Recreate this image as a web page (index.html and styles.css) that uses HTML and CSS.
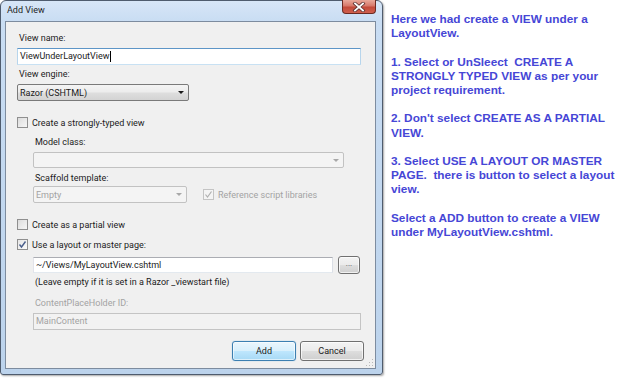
FILE: index.html
```html
<!DOCTYPE html>
<html>
<head>
<meta charset="utf-8">
<title>Add View</title>
<link rel="stylesheet" href="styles.css">
</head>
<body>
<div class="page">
  <div class="window">
    <div class="titlebar">
      <span class="title">Add View</span>
      <div class="close">
        <svg width="14" height="10" viewBox="0 0 14 10">
          <path d="M3 1.5 L11 8.5 M11 1.5 L3 8.5" stroke="#5a3030" stroke-width="3.4" stroke-linecap="square"/>
          <path d="M3 1.5 L11 8.5 M11 1.5 L3 8.5" stroke="#ffffff" stroke-width="1.8" stroke-linecap="square"/>
        </svg>
      </div>
    </div>
    <div class="client">
      <div class="label l-name">View name:</div>
      <div class="textbox focused full">ViewUnderLayoutView<span class="caret"></span></div>
      <div class="label l-engine">View engine:</div>
      <div class="combo engine"><span>Razor (CSHTML)</span><span class="arrow"></span></div>

      <div class="check-row r-strong"><span class="check"></span><span>Create a strongly-typed view</span></div>
      <div class="indent">
        <div class="label l-model">Model class:</div>
        <div class="combo disabled model"><span></span><span class="arrow"></span></div>
        <div class="label l-scaffold">Scaffold template:</div>
        <div class="scaffold-row">
          <div class="combo disabled scaffold"><span>Empty</span><span class="arrow"></span></div>
          <div class="check-row ref"><span class="check checked disabled-check"><svg width="9" height="9" viewBox="0 0 9 9"><path d="M1.5 4.5 L3.5 7 L7.5 1.5" fill="none" stroke="#b0b0b0" stroke-width="1.2"/></svg></span><span class="muted">Reference script libraries</span></div>
        </div>
      </div>

      <div class="check-row r-partial"><span class="check"></span><span>Create as a partial view</span></div>
      <div class="check-row r-layout"><span class="check checked"><svg width="9" height="9" viewBox="0 0 9 9"><path d="M1.5 4.5 L3.5 7 L7.5 1.5" fill="none" stroke="#4a5f8c" stroke-width="1.4"/></svg></span><span>Use a layout or master page:</span></div>
      <div class="indent">
        <div class="layout-row">
          <div class="textbox layout">~/Views/MyLayoutView.cshtml</div>
          <div class="btn dots">...</div>
        </div>
        <div class="label l-leave">(Leave empty if it is set in a Razor _viewstart file)</div>
        <div class="label muted l-cph">ContentPlaceHolder ID:</div>
        <div class="textbox disabled-box">MainContent</div>
      </div>

      <div class="buttons">
        <div class="btn default">Add</div>
        <div class="btn">Cancel</div>
      </div>
      <svg class="grip" width="8" height="8" viewBox="0 0 8 8">
        <rect x="6" y="0" width="1" height="1" fill="#b8b8b8"/>
        <rect x="3" y="3" width="1" height="1" fill="#b8b8b8"/>
        <rect x="6" y="3" width="1" height="1" fill="#b8b8b8"/>
        <rect x="0" y="6" width="1" height="1" fill="#b8b8b8"/>
        <rect x="3" y="6" width="1" height="1" fill="#b8b8b8"/>
        <rect x="6" y="6" width="1" height="1" fill="#b8b8b8"/>
      </svg>
    </div>
  </div>

  <div class="notes">
    <p>Here we had create a VIEW under a<br>LayoutView.</p>
    <p>1. Select or UnSleect&nbsp; CREATE A<br>STRONGLY TYPED VIEW as per your<br>project requirement.</p>
    <p>2. Don't select CREATE AS A PARTIAL<br>VIEW.</p>
    <p>3. Select USE A LAYOUT OR MASTER<br>PAGE.&nbsp; there is button to select a layout<br>view.</p>
    <p>Select a ADD button to create a VIEW<br>under MyLayoutView.cshtml.</p>
  </div>
</div>
</body>
</html>
```

FILE: styles.css
```css
html, body {
  margin: 0;
  padding: 0;
  background: #ffffff;
}

.page {
  display: flex;
  align-items: flex-start;
  width: 642px;
  height: 378px;
  overflow: hidden;
}

/* ---------- window ---------- */
.window {
  box-sizing: border-box;
  width: 383px;
  height: 375px;
  border: 1px solid #4f5c6e;
  border-radius: 6px 6px 3px 3px;
  background: linear-gradient(to bottom, #d7e6f7 0px, #c9ddf3 20px, #bcd3ec 100%);
  padding: 0 6px 5px 4px;
  display: flex;
  flex-direction: column;
  box-shadow: 1px 1px 2px rgba(0, 0, 0, 0.35);
  font-family: Roboto, "Liberation Sans", sans-serif;
  font-size: 9px;
  color: #1b1b1b;
}

.titlebar {
  height: 20px;
  display: flex;
  align-items: flex-start;
  flex: none;
}

.title {
  margin: 3px 0 0 2px;
  font-size: 9px;
  line-height: 12px;
  color: #1e1e1e;
}

.close {
  margin-left: auto;
  margin-top: -1px;
  width: 34px;
  height: 14px;
  box-sizing: border-box;
  border: 1px solid #6b2a22;
  border-top: none;
  border-radius: 0 0 4px 4px;
  background: linear-gradient(to bottom, #e9a99b 0%, #d7786a 45%, #c34a3a 55%, #d0604e 100%);
  display: flex;
  align-items: center;
  justify-content: center;
}

.client {
  position: relative;
  flex: 1;
  border: 1px solid #7d8c9f;
  background: #f0f0f0;
  padding: 10px 14px 0 11px;
}

/* ---------- text ---------- */
.label {
  line-height: 12px;
  height: 12px;
  padding-left: 2px;
  white-space: nowrap;
}

.muted {
  color: #a3a3a3;
}

.l-engine { margin-top: 3px; }
.l-model { margin-top: 7px; }
.l-scaffold { margin-top: 4px; }
.l-leave { margin-top: 2px; }
.l-cph { margin-top: 9px; }

/* ---------- inputs ---------- */
.textbox {
  box-sizing: border-box;
  height: 17px;
  background: #ffffff;
  border: 1px solid;
  border-color: #abadb3 #dbdfe6 #e3e9ef #e2e3ea;
  padding: 0 2px;
  line-height: 15px;
  white-space: nowrap;
  display: flex;
  align-items: center;
}

.textbox.full {
  margin-top: 4px;
  width: 344px;
}

.textbox.focused {
  border-color: #5d95c7 #b7d5ec #c8e1f3 #b7d5ec;
}

.caret {
  display: inline-block;
  width: 1px;
  height: 11px;
  background: #000;
}

.combo {
  box-sizing: border-box;
  height: 17px;
  border: 1px solid #7a7a7a;
  border-radius: 2px;
  background: linear-gradient(to bottom, #f4f4f4 0%, #ececec 48%, #dedede 52%, #d3d3d3 100%);
  display: flex;
  align-items: center;
  justify-content: space-between;
  padding: 0 4px 0 2px;
}

.combo.engine {
  margin-top: 4px;
  width: 172px;
}

.arrow {
  width: 0;
  height: 0;
  border-left: 3px solid transparent;
  border-right: 3px solid transparent;
  border-top: 3px solid #1a1a1a;
}

.combo.disabled {
  background: #f4f4f4;
  border-color: #c2c2c2;
  color: #a3a3a3;
}

.combo.disabled .arrow {
  border-top-color: #a8a8a8;
}

.combo.model {
  margin-top: 4px;
  width: 311px;
  height: 16px;
}

.combo.scaffold {
  width: 154px;
}

/* ---------- checkboxes ---------- */
.check-row {
  display: flex;
  align-items: center;
  gap: 4px;
  height: 13px;
  white-space: nowrap;
}

.check {
  box-sizing: border-box;
  width: 11px;
  height: 11px;
  border: 1px solid #8f8f8f;
  background: linear-gradient(135deg, #dcdcdc, #f6f6f6);
  display: flex;
  align-items: center;
  justify-content: center;
  flex: none;
}

.check.checked {
  background: linear-gradient(135deg, #e6e6e6, #fbfbfb);
}

.check.disabled-check {
  border-color: #c4c4c4;
  background: #f4f4f4;
}

.r-strong { margin-top: 15px; }
.r-partial { margin-top: 15px; }
.r-layout { margin-top: 7px; }

.indent {
  padding-left: 16px;
}

.scaffold-row {
  margin-top: 2px;
  height: 17px;
  display: flex;
  align-items: center;
  gap: 16px;
}

.check-row.ref {
  gap: 4px;
}

.layout-row {
  margin-top: 5px;
  height: 18px;
  display: flex;
  align-items: center;
  gap: 5px;
}

.textbox.layout {
  width: 300px;
  height: 16px;
}

.textbox.disabled-box {
  margin-top: 4px;
  width: 328px;
  background: #f2f2f2;
  border-color: #c4c4c4;
  color: #a3a3a3;
}

/* ---------- buttons ---------- */
.btn {
  box-sizing: border-box;
  width: 64px;
  height: 20px;
  border: 1px solid #707070;
  border-radius: 3px;
  background: linear-gradient(to bottom, #f3f3f3 0%, #ebebeb 48%, #dddddd 52%, #cfcfcf 100%);
  box-shadow: inset 0 0 0 1px rgba(255, 255, 255, 0.7);
  display: flex;
  align-items: center;
  justify-content: center;
  color: #1b1b1b;
}

.btn.default {
  border-color: #3c7fb1;
  background: linear-gradient(to bottom, #eaf6fd 0%, #d9f0fc 48%, #bee6fd 52%, #a7d9f5 100%);
  box-shadow: inset 0 0 0 1px rgba(255, 255, 255, 0.6), 0 0 1px #6fb3e0;
}

.btn.dots {
  width: 22px;
  height: 18px;
  font-size: 8px;
  color: #555;
  padding-bottom: 3px;
}

.buttons {
  margin-top: 11px;
  margin-right: -3px;
  display: flex;
  justify-content: flex-end;
  gap: 4px;
}

.grip {
  position: absolute;
  right: 1px;
  bottom: 1px;
}

/* ---------- notes ---------- */
.notes {
  margin-left: 8px;
  padding-top: 12px;
  font-family: "Liberation Sans", Arial, sans-serif;
  font-weight: bold;
  font-size: 11.8px;
  line-height: 14.2px;
  color: #4646d6;
  white-space: nowrap;
}

.notes p {
  margin: 0 0 14.2px 0;
}
```
